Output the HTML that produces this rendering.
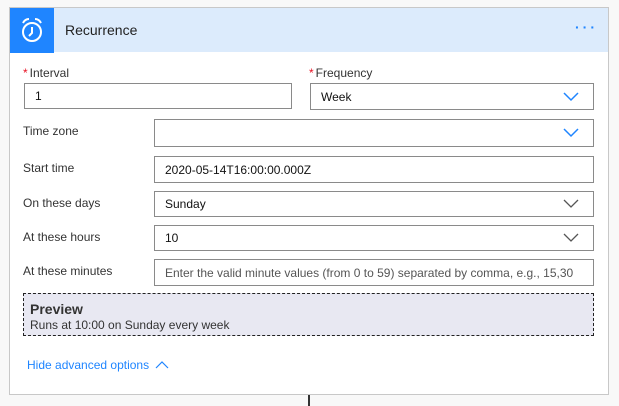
<!DOCTYPE html>
<html><head><style>
body{margin:0;width:619px;height:406px;background:#f8f8f8;font-family:"Liberation Sans",sans-serif;position:relative;overflow:hidden}
.card{position:absolute;left:9px;top:7px;width:598px;height:386px;background:#fff;border:1px solid #c8c8c8}
.hdr{position:absolute;left:0;top:0;width:598px;height:44px;background:#dcebfc}
.ico{position:absolute;left:0;top:0;width:44px;height:45px;background:#1f85ff}
.title{position:absolute;left:55px;top:14px;font-size:14px;color:#222}
.dots{position:absolute;right:10px;top:11px;color:#1f85ff;font-size:14px;letter-spacing:3px;font-weight:bold}
.a{position:absolute;font-size:12px;color:#333}
.in{position:absolute;border:1px solid #8a8a8a;background:#fff;box-sizing:border-box;font-size:12px;color:#111;padding-left:10px;display:flex;align-items:center}
.star{color:#e81123;margin-right:2px}
.chev{position:absolute;right:14px;top:50%;margin-top:-5px}
</style></head><body>
<div class="card">
<div class="hdr"><div class="ico">
<svg width="44" height="45" viewBox="0 0 44 45"><g fill="none" stroke="#fff" stroke-width="2"><circle cx="22" cy="24" r="9"/><path d="M22 19v6l-3 3"/><path d="M13 15q2-4 6-4M31 15q-2-4-6-4"/></g></svg>
</div><div class="title">Recurrence</div><div class="dots">···</div></div>
</div>
<div class="a" style="left:23px;top:66px"><span class="star">*</span>Interval</div>
<div class="in" style="left:24px;top:83px;width:268px;height:26px">1</div>
<div class="a" style="left:309px;top:66px"><span class="star">*</span>Frequency</div>
<div class="in" style="left:310px;top:83px;width:284px;height:27px">Week<svg class="chev" width="16" height="10"><path d="M1 1l7 7 7-7" fill="none" stroke="#1f85ff" stroke-width="1.5"/></svg></div>
<div class="a" style="left:23px;top:124px">Time zone</div>
<div class="in" style="left:154px;top:119px;width:440px;height:28px"><svg class="chev" width="16" height="10"><path d="M1 1l7 7 7-7" fill="none" stroke="#1f85ff" stroke-width="1.5"/></svg></div>
<div class="a" style="left:23px;top:161px">Start time</div>
<div class="in" style="left:154px;top:156px;width:440px;height:27px">2020-05-14T16:00:00.000Z</div>
<div class="a" style="left:23px;top:196px">On these days</div>
<div class="in" style="left:154px;top:191px;width:440px;height:26px">Sunday<svg class="chev" width="16" height="10"><path d="M1 1l7 7 7-7" fill="none" stroke="#555" stroke-width="1.3"/></svg></div>
<div class="a" style="left:23px;top:230px">At these hours</div>
<div class="in" style="left:154px;top:225px;width:440px;height:26px">10<svg class="chev" width="16" height="10"><path d="M1 1l7 7 7-7" fill="none" stroke="#555" stroke-width="1.3"/></svg></div>
<div class="a" style="left:23px;top:264px">At these minutes</div>
<div class="in" style="left:154px;top:259px;width:440px;height:27px;color:#555">Enter the valid minute values (from 0 to 59) separated by comma, e.g., 15,30</div>
<div style="position:absolute;left:23px;top:293px;width:571px;height:43px;background:#e8e8f2;border:1px dashed #222;box-sizing:border-box">
<div style="position:absolute;left:6px;top:7px;font-size:14px;font-weight:bold;color:#333">Preview</div>
<div style="position:absolute;left:6px;top:24px;font-size:12px;color:#333">Runs at 10:00 on Sunday every week</div></div>
<div class="a" style="left:27px;top:358px;color:#1f85ff">Hide advanced options</div>
<svg style="position:absolute;left:155px;top:360px" width="14" height="9"><path d="M1 8l6-6 6 6" fill="none" stroke="#1f85ff" stroke-width="1.2"/></svg>
<div style="position:absolute;left:308px;top:395px;width:2px;height:11px;background:#333"></div>
</body></html>
